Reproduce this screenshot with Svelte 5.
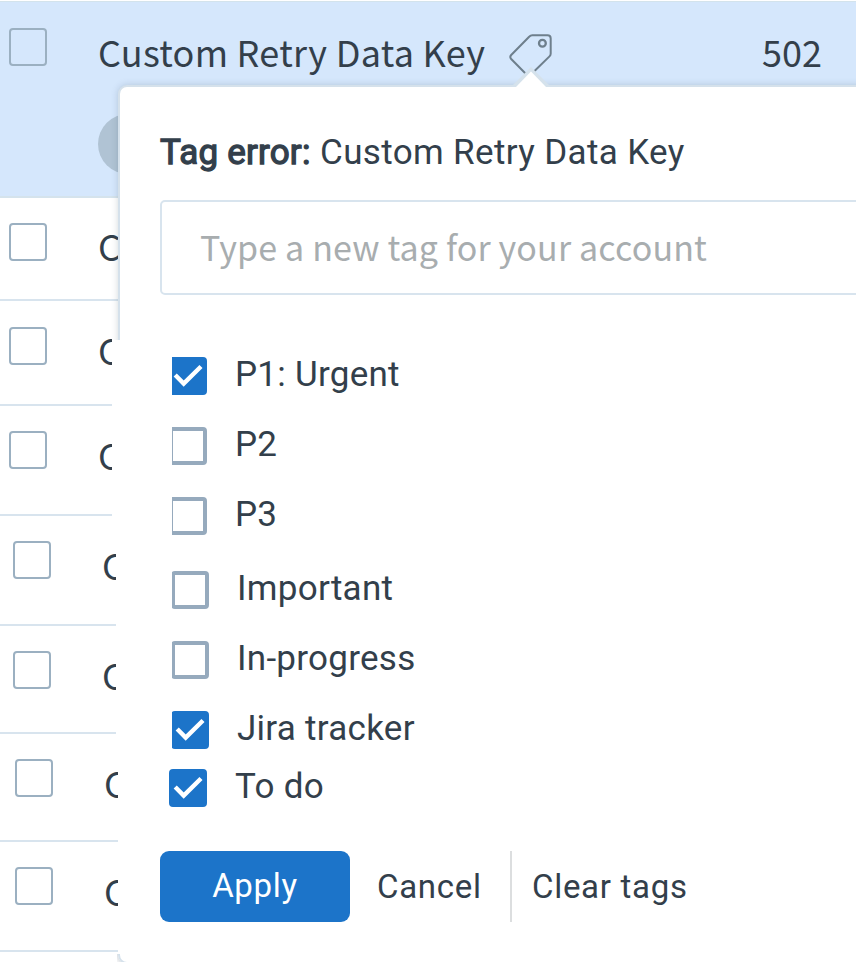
<script>
  const rows = [
    { height: 103, top: 25, shift: 0, width: 118, drop: 9 },
    { height: 105, top: 26, shift: 0, width: 112, drop: 9 },
    { height: 110, top: 25, shift: 0, width: 112, drop: 10 },
    { height: 110, top: 25, shift: 4, width: 116, drop: 10 },
    { height: 108, top: 25, shift: 4, width: 116, drop: 10 },
    { height: 108, top: 25, shift: 6, width: 118, drop: 10 },
    { height: 110, top: 25, shift: 6, width: 118, drop: 10 }
  ];
  let tags = $state([
    { name: 'P1: Urgent', checked: true, gap: 32, left: 9, cut: 3 },
    { name: 'P2', checked: false, gap: 32, left: 9, cut: 3 },
    { name: 'P3', checked: false, gap: 36, left: 9, cut: 3 },
    { name: 'Important', checked: false, gap: 32, left: 11, cut: 1 },
    { name: 'In-progress', checked: false, gap: 32, left: 11, cut: 1 },
    { name: 'Jira tracker', checked: true, gap: 20, left: 11, cut: 1 },
    { name: 'To do', checked: true, gap: 0, left: 9, cut: 0 }
  ]);
</script>

<main>
  <section class="selected">
    <span class="box"></span>
    <div class="name">
      <span class="key">Custom Retry Data Key</span>
      <span class="avatar"></span>
    </div>
    <svg class="tagicon" width="44" height="44" viewBox="0 0 44 44" fill="none" stroke="#6e7f8c" stroke-width="2">
      <path d="M17 41 2.2 26q-1.8-2 0-4L20.4 3.5Q21.6 2.2 23.3 2.2H38.500q3.200 0 3.200 3.200V20.500q0 1.700-1.200 2.900L25 38.500" />
      <circle cx="33.400" cy="10.300" r="3.400" stroke-width="2.300" />
    </svg>
    <span class="count">502</span>
  </section>

  {#each rows as r}
    <section class="row" style="height:{r.height}px;width:{r.width}px;padding-left:{9 + r.shift}px;padding-top:{r.top}px">
      <span class="box"></span>
      <span class="letter" style="padding-top:{r.drop}px">C</span>
    </section>
  {/each}

  <div class="edge"><div class="frame"></div></div>
  <div class="foot"><div class="curve"></div></div>
  <svg class="arrow" width="44" height="22" viewBox="0 0 44 22">
    <path d="M2 20 22 0 42 20" fill="#d5e2ec" />
    <path d="M6 22V21L22 4.500 38 21V22Z" fill="#fff" />
  </svg>

  <div class="popover">
    <h1><b>Tag error:</b><span>Custom Retry Data Key</span></h1>
    <input placeholder="Type a new tag for your account" />
    <div class="tags">
      {#each tags as t}
        <button
          class="tag"
          style="padding-left:{t.left}px;margin-bottom:{t.gap}px"
          onclick={() => (t.checked = !t.checked)}
        >
          <span class="check" class:on={t.checked} style="clip-path:inset(0 0 0 {t.cut}px)">
            <svg width="38" height="38" viewBox="0 0 38 38" fill="none" stroke="#fff" stroke-width="4.400">
              {#if t.checked}<path d="M6.200 18 14.700 26.600 32 9.500" />{/if}
            </svg>
          </span>
          <span class="label">{t.name}</span>
        </button>
      {/each}
    </div>
    <footer>
      <button class="apply">Apply</button>
      <button class="cancel">Cancel</button>
      <button class="clear">Clear tags</button>
    </footer>
  </div>
</main>

<style>
  :global(body) { background: #fff; }
  main {
    position: relative;
    width: 856px;
    height: 962px;
    overflow: hidden;
    background: #fff;
    color: #333f4b;
    font-family: Roboto, sans-serif;
  }
  section { box-sizing: border-box; display: flex; align-items: flex-start; }
  .selected {
    height: 197px;
    margin-top: 1px;
    padding: 26px 34px 0 9px;
    background: #d5e7fc;
    border-top: 1px solid #d3e3ec;
    border-bottom: 2px solid #d5e3ec;
    font: 36px/46px "Noto Sans CJK SC", sans-serif;
  }
  .box {
    box-sizing: border-box;
    flex: none;
    width: 38px;
    height: 38px;
    border: 2px solid #9bb0c1;
    border-radius: 4px;
  }
  .name { display: flex; flex-direction: column; margin-left: 51px; width: 403px; }
  .key { white-space: nowrap; letter-spacing: 0.27px; }
  .avatar { width: 60px; height: 60px; margin-top: 40px; border-radius: 50%; background: #b0c3d4; }
  .tagicon { margin: 5px 0 0 8px; flex: none; }
  .count { margin-left: auto; }
  .row { overflow: hidden; border-bottom: 2px solid #d8e4ee; }
  .letter {
    margin-left: 51px;
    font: 36px/26px "Noto Sans CJK SC", sans-serif;
  }
  .edge { position: absolute; left: 108px; top: 75px; width: 748px; height: 265px; overflow: hidden; }
  .frame {
    margin: 10px 0 0 10px;
    width: 800px;
    height: 890px;
    box-sizing: border-box;
    background: #fff;
    border: 2px solid #d5e1eb;
    border-radius: 9px;
    box-shadow: 0 0 7px rgba(60, 80, 100, 0.22);
  }
  .foot { position: absolute; left: 117px; top: 954px; width: 12px; height: 8px; overflow: hidden; }
  .curve {
    margin: -30px 0 0 1px;
    width: 60px;
    height: 40px;
    box-sizing: border-box;
    border: 2px solid #d5e1eb;
    border-radius: 9px;
    box-shadow: 0 0 6px rgba(60, 80, 100, 0.4);
  }
  .arrow { position: absolute; left: 509px; top: 67px; }
  .popover {
    position: absolute;
    left: 120px;
    top: 87px;
    width: 780px;
    box-sizing: border-box;
    padding: 41px 0 0 40px;
    display: flex;
    flex-direction: column;
  }
  h1 { margin: 0; display: flex; font-weight: 400; font-size: 35px; line-height: 49px; height: 48px; white-space: nowrap; letter-spacing: 0.36px; }
  b { font-weight: 400; -webkit-text-stroke: 1.3px #333f4b; width: 160px; letter-spacing: 0.2px; }
  input {
    box-sizing: border-box;
    width: 740px;
    height: 95px;
    margin: 24px 0 0;
    padding: 0 0 3px 38px;
    border: 2px solid #d8e4ee;
    border-radius: 5px;
    background: #fff;
    outline: 0;
    font: 34px "Noto Sans CJK SC", sans-serif;
    letter-spacing: 0.15px;
  }
  input::placeholder { color: #a8adaf; opacity: 1; }
  button { border: 0; background: none; padding: 0; color: inherit; font: 35px/1 Roboto, sans-serif; text-align: left; white-space: nowrap; }
  .tags { display: flex; flex-direction: column; margin-top: 62px; }
  .tag { display: flex; height: 38px; gap: 28px; }
  .check { flex: none; width: 38px; height: 38px; box-sizing: border-box; border: 4px solid #96aabd; border-radius: 4px; }
  .check.on { background: #1c74c9; border-color: #1c74c9; }
  .check svg { display: block; margin: -4px; }
  .label { line-height: 36px; letter-spacing: 0.27px; }
  footer { display: flex; height: 71px; margin-top: 44px; }
  footer button { font-size: 33px; line-height: 69px; letter-spacing: 0.7px; }
  .apply { display: flex; justify-content: center; width: 190px; border-radius: 9px; background: #1c74c9; color: #fff; }
  .cancel { width: 160px; padding-left: 27px; box-sizing: border-box; }
  .clear { border-left: 2px solid #dcdedf; padding-left: 20px; }
</style>
